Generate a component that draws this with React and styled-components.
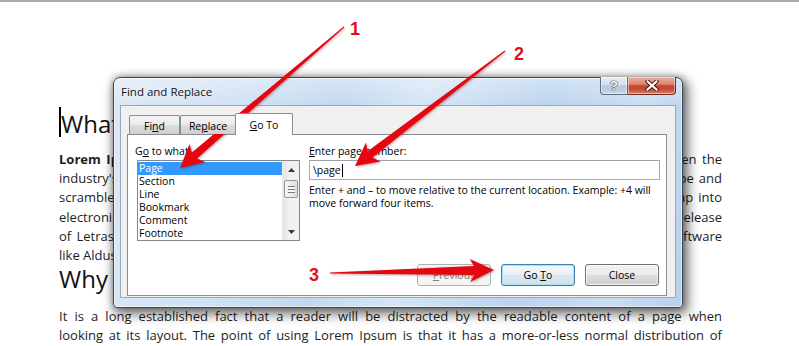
import React from "react";
import styled, { createGlobalStyle } from "styled-components";

const GlobalStyle = createGlobalStyle`
  html, body { margin: 0; padding: 0; background: #ffffff; }
  body { font-family: "Open Sans", "Noto Sans", sans-serif; overflow: hidden; }
  * { box-sizing: border-box; }
`;

const Page = styled.div`
  position: relative;
  width: 799px;
  height: 346px;
  overflow: hidden;
  background: #ffffff;
`;

const TopRule = styled.div`
  height: 2px;
  background: #a9adb2;
`;

const Doc = styled.article`
  width: 663px;
  margin-left: 59px;
  padding-top: 107px;
  color: #1d1d1d;
  font-family: "Open Sans", sans-serif;
`;

const Heading = styled.h1`
  margin: ${(p) => p.$mt || 0}px 0 0;
  font-size: 24px;
  font-weight: 400;
  line-height: 30px;
  color: #111;
  white-space: nowrap;
`;

const Caret = styled.span`
  display: inline-block;
  width: 2px;
  height: 30px;
  margin-top: -2px;
  vertical-align: top;
  background: #000;
`;

const Para = styled.div`
  margin-top: ${(p) => p.$mt}px;
  font-size: 13px;
  line-height: 19.2px;
`;

const Line = styled.div`
  text-align: ${(p) => (p.$last ? "left" : "justify")};
  text-align-last: ${(p) => (p.$last ? "left" : "justify")};
`;

/* ---------- dialog window ---------- */

const Window = styled.section`
  position: absolute;
  left: 113px;
  top: 77px;
  width: 570px;
  height: 231px;
  display: flex;
  flex-direction: column;
  padding: 0 6px 9px;
  border: 1px solid #3b4855;
  border-radius: 7px 7px 4px 4px;
  background:
    linear-gradient(180deg, rgba(255,255,255,0.35), rgba(255,255,255,0) 28px),
    linear-gradient(100deg, #dbe8f5 0%, #cfe1f3 22%, #c2d8ef 38%, #d5e5f6 52%, #bad3ee 72%, #c9ddf2 88%, #b7d0ec 100%);
  box-shadow: inset 0 0 0 1px rgba(255,255,255,0.55), 3px 4px 12px 2px rgba(0,0,0,0.55), 0 0 6px rgba(0,0,0,0.3);
  font-family: "Open Sans", sans-serif;
`;

const TitleBar = styled.header`
  height: 27px;
  display: flex;
  justify-content: space-between;
  align-items: flex-start;
`;

const Title = styled.h2`
  margin: 6px 0 0 1px;
  font-size: 11.5px;
  font-weight: 400;
  line-height: 15px;
  color: #141414;
  text-shadow: 0 0 6px rgba(255,255,255,0.9);
`;

const CaptionButtons = styled.div`
  display: flex;
  margin-top: -1px;
`;

const CaptionButton = styled.div`
  width: ${(p) => p.$w}px;
  height: 18px;
  border: 1px solid ${(p) => (p.$close ? "#6e2b21" : "#5d6d81")};
  border-top: none;
  border-left-width: ${(p) => (p.$close ? 0 : 1)}px;
  border-radius: ${(p) => (p.$close ? "0 0 4px 0" : "0 0 0 4px")};
  background: ${(p) =>
    p.$close
      ? "linear-gradient(#eab0a2 0%, #de8573 42%, #c8432e 52%, #c44a35 72%, #dc8466 100%)"
      : "linear-gradient(#e6edf5 0%, #d4dfeb 45%, #b8c8da 52%, #bfcee0 80%, #cbd9e8 100%)"};
  box-shadow: inset 0 0 0 1px rgba(255,255,255,0.45);
  display: flex;
  align-items: center;
  justify-content: center;
`;

const HelpGlyph = styled.span`
  font: bold 13px/1 "Liberation Sans", Arial, sans-serif;
  color: #ffffff;
  text-shadow: 0 0 1px #2c3440, 0 0 1px #2c3440, 0 0 1px #2c3440;
`;

const Client = styled.div`
  flex: 1;
  display: flex;
  flex-direction: column;
  padding: 7px 8px 1px 6px;
  background: #f0f0f0;
  border: 1px solid #98a8ba;
`;

const TabStrip = styled.div`
  height: 21px;
  display: flex;
  align-items: flex-end;
  padding-left: 2px;
`;

const Tab = styled.div`
  position: relative;
  z-index: ${(p) => (p.$active ? 2 : 1)};
  width: ${(p) => p.$w}px;
  height: ${(p) => (p.$active ? 22 : 19)}px;
  margin-bottom: ${(p) => (p.$active ? -1 : 0)}px;
  margin-left: ${(p) => (p.$active ? -1 : 0)}px;
  padding-top: ${(p) => (p.$active ? 0 : 1)}px;
  border: 1px solid #898c95;
  border-bottom: none;
  border-radius: 2px 2px 0 0;
  background: ${(p) =>
    p.$active ? "#ffffff" : "linear-gradient(#f3f3f3 0%, #ebebeb 50%, #dddddd 51%, #cfcfcf 100%)"};
  display: flex;
  align-items: center;
  justify-content: center;
  font-size: 10.5px;
  color: #000;
`;

const Panel = styled.div`
  flex: 1;
  display: flex;
  flex-direction: column;
  padding: 10px 6px 9px 7px;
  background: #ffffff;
  border: 1px solid #898c95;
  font-size: 10.5px;
  line-height: 13px;
  color: #000;
`;

const Columns = styled.div`
  display: flex;
  gap: 9px;
`;

const LeftCol = styled.div`
  width: 165px;
  display: flex;
  flex-direction: column;
`;

const RightCol = styled.div`
  flex: 1;
  display: flex;
  flex-direction: column;
`;

const Label = styled.div`
  height: 13px;
  margin-bottom: 2px;
  white-space: nowrap;
`;

const Key = styled.u`
  text-decoration: underline;
  text-underline-offset: 1px;
`;

const ListBox = styled.div`
  width: 163px;
  height: 81px;
  margin-left: 2px;
  display: flex;
  background: #ffffff;
  border: 1px solid #828790;
`;

const Items = styled.div`
  flex: 1;
  padding-top: 1px;
  overflow: hidden;
`;

const Item = styled.div`
  height: 13px;
  line-height: 13px;
  padding-left: 1px;
  white-space: nowrap;
  background: ${(p) => (p.$sel ? "#3399ff" : "transparent")};
  color: ${(p) => (p.$sel ? "#ffffff" : "#000000")};
`;

const ScrollBar = styled.div`
  width: 17px;
  display: flex;
  flex-direction: column;
  background: linear-gradient(90deg, #e4e4e4 0%, #f1f1f1 40%, #f1f1f1 100%);
  border-left: 1px solid #ececec;
`;

const ScrollArrow = styled.div`
  height: 17px;
  display: flex;
  align-items: center;
  justify-content: center;
`;

const Thumb = styled.div`
  height: 18px;
  margin: 2px 1px 0;
  border: 1px solid #979797;
  border-radius: 2px;
  background: linear-gradient(90deg, #f6f6f6 0%, #ececec 50%, #dcdcdc 100%);
  display: flex;
  align-items: center;
  justify-content: center;
`;

const Grip = styled.div`
  width: 7px;
  height: 7px;
  background: repeating-linear-gradient(180deg, #7a7a7a 0 1px, #f8f8f8 1px 3px);
`;

const Track = styled.div`
  flex: 1;
`;

const TextBox = styled.div`
  height: 20px;
  display: flex;
  align-items: center;
  padding-left: 3px;
  background: #ffffff;
  border: 1px solid #a7adb6;
  border-top-color: #9ea3ad;
`;

const TextCaret = styled.span`
  display: inline-block;
  width: 1px;
  height: 13px;
  margin-left: 1px;
  background: #000;
  vertical-align: middle;
`;

const Help = styled.p`
  margin: 4px 0 0;
  font-size: 10.5px;
  line-height: 13px;
`;

const ButtonRow = styled.div`
  margin-top: auto;
  display: flex;
  justify-content: flex-end;
  gap: 10px;
  padding-right: 1px;
`;

const Button = styled.div`
  width: 74px;
  height: 22px;
  display: flex;
  align-items: center;
  justify-content: center;
  border-radius: 3px;
  font-size: 10.5px;
  border: 1px solid
    ${(p) => (p.$variant === "disabled" ? "#adb2b5" : p.$variant === "default" ? "#3c7fb1" : "#707070")};
  color: ${(p) => (p.$variant === "disabled" ? "#838383" : "#000")};
  background: ${(p) =>
    p.$variant === "disabled"
      ? "#f4f4f4"
      : p.$variant === "default"
      ? "linear-gradient(#f4f9fc 0%, #e9f1f7 48%, #dbe7f0 52%, #d2e0ea 100%)"
      : "linear-gradient(#f2f2f2 0%, #ebebeb 48%, #dddddd 52%, #cfcfcf 100%)"};
  box-shadow: ${(p) =>
    p.$variant === "default"
      ? "inset 0 0 0 1px #9ee3fb"
      : p.$variant === "disabled"
      ? "none"
      : "inset 0 0 0 1px rgba(255,255,255,0.75)"};
`;

const Caption = styled.span`
  white-space: pre;
`;

/* ---------- annotations ---------- */

const Overlay = styled.svg`
  position: absolute;
  left: 0;
  top: 0;
  pointer-events: none;
  filter: drop-shadow(1px 1px 1px rgba(80, 0, 0, 0.35));
`;

const Num = styled.span`
  position: absolute;
  left: ${(p) => p.$x}px;
  top: ${(p) => p.$y}px;
  font: bold 18px/18px "Liberation Sans", Arial, sans-serif;
  color: #e3101b;
`;

function arrowPoints(tail, tip, o) {
  const [tx, ty] = tail;
  const [hx, hy] = tip;
  const dx = hx - tx;
  const dy = hy - ty;
  const L = Math.hypot(dx, dy);
  const ux = dx / L;
  const uy = dy / L;
  const nx = -uy;
  const ny = ux;
  const bx = hx - ux * o.head;
  const by = hy - uy * o.head;
  const wx = bx - ux * 4;
  const wy = by - uy * 4;
  const p = (x, y) => `${x.toFixed(1)},${y.toFixed(1)}`;
  return [
    p(tx + (nx * o.tail) / 2, ty + (ny * o.tail) / 2),
    p(bx + (nx * o.shaft) / 2, by + (ny * o.shaft) / 2),
    p(wx + nx * o.half, wy + ny * o.half),
    p(hx, hy),
    p(wx - nx * o.half, wy - ny * o.half),
    p(bx - (nx * o.shaft) / 2, by - (ny * o.shaft) / 2),
    p(tx - (nx * o.tail) / 2, ty - (ny * o.tail) / 2),
  ].join(" ");
}

const ARROWS = [
  { tail: [344, 27], tip: [180, 168], o: { tail: 1, shaft: 8, head: 19, half: 12 } },
  { tail: [505, 51], tip: [355, 166], o: { tail: 1, shaft: 8, head: 19, half: 12 } },
  { tail: [330, 273], tip: [494, 270], o: { tail: 1.2, shaft: 9, head: 20, half: 11.5 } },
];

const LIST = ["Page", "Section", "Line", "Bookmark", "Comment", "Footnote"];

function UpArrow() {
  return (
    <svg width="7" height="4" viewBox="0 0 7 4">
      <path d="M0 4 L3.5 0 L7 4 Z" fill="#3a3a3a" />
    </svg>
  );
}

function DownArrow() {
  return (
    <svg width="7" height="4" viewBox="0 0 7 4">
      <path d="M0 0 L7 0 L3.5 4 Z" fill="#3a3a3a" />
    </svg>
  );
}

function CloseGlyph() {
  return (
    <svg width="14" height="11" viewBox="0 0 14 11">
      <path d="M2.5 1.5 L11.5 9.5 M11.5 1.5 L2.5 9.5" stroke="#3d1a14" strokeWidth="4" strokeLinecap="square" />
      <path d="M2.5 1.5 L11.5 9.5 M11.5 1.5 L2.5 9.5" stroke="#ffffff" strokeWidth="2.2" strokeLinecap="square" />
    </svg>
  );
}

export default function App() {
  return (
    <>
      <GlobalStyle />
      <Page>
        <TopRule />
        <Doc>
          <Heading>
            <Caret />
            What is Lorem Ipsum?
          </Heading>
          <Para $mt={11}>
            <Line>
              <b>Lorem Ipsum</b> is simply dummy text of the printing and typesetting industry. Lorem Ipsum has been the
            </Line>
            <Line>industry's standard dummy text ever since the 1500s, when an unknown printer took a galley of type and</Line>
            <Line>scrambled it to make a type specimen book. It has survived not only five centuries, but also the leap into</Line>
            <Line>electronic typesetting, remaining essentially unchanged. It was popularised in the 1960s with the release</Line>
            <Line>of Letraset sheets containing Lorem Ipsum passages, and more recently with desktop publishing software</Line>
            <Line $last>like Aldus PageMaker including versions of Lorem Ipsum.</Line>
          </Para>
          <Heading $mt={-1}>Why do we use it?</Heading>
          <Para $mt={13}>
            <Line>It is a long established fact that a reader will be distracted by the readable content of a page when</Line>
            <Line>looking at its layout. The point of using Lorem Ipsum is that it has a more-or-less normal distribution of</Line>
            <Line>letters, as opposed to using 'Content here, content here', making it look like readable English. Many</Line>
          </Para>
        </Doc>

        <Window>
          <TitleBar>
            <Title>Find and Replace</Title>
            <CaptionButtons>
              <CaptionButton $w={28}>
                <HelpGlyph>?</HelpGlyph>
              </CaptionButton>
              <CaptionButton $w={48} $close>
                <CloseGlyph />
              </CaptionButton>
            </CaptionButtons>
          </TitleBar>
          <Client>
            <TabStrip>
              <Tab $w={51}>
                <Caption>
                  Fi<Key>n</Key>d
                </Caption>
              </Tab>
              <Tab $w={56}>
                <Caption>
                  Re<Key>p</Key>lace
                </Caption>
              </Tab>
              <Tab $w={58} $active>
                <Caption>
                  <Key>G</Key>o To
                </Caption>
              </Tab>
            </TabStrip>
            <Panel>
              <Columns>
                <LeftCol>
                  <Label>
                    G<Key>o</Key> to what:
                  </Label>
                  <ListBox>
                    <Items>
                      {LIST.map((t, i) => (
                        <Item key={t} $sel={i === 0}>
                          {t}
                        </Item>
                      ))}
                    </Items>
                    <ScrollBar>
                      <ScrollArrow>
                        <UpArrow />
                      </ScrollArrow>
                      <Thumb>
                        <Grip />
                      </Thumb>
                      <Track />
                      <ScrollArrow>
                        <DownArrow />
                      </ScrollArrow>
                    </ScrollBar>
                  </ListBox>
                </LeftCol>
                <RightCol>
                  <Label>
                    <Key>E</Key>nter page number:
                  </Label>
                  <TextBox>
                    <Caption>\page</Caption>
                    <TextCaret />
                  </TextBox>
                  <Help>
                    Enter + and – to move relative to the current location. Example: +4 will
                    <br />
                    move forward four items.
                  </Help>
                </RightCol>
              </Columns>
              <ButtonRow>
                <Button $variant="disabled">
                  <Caption>
                    <Key>P</Key>revious
                  </Caption>
                </Button>
                <Button $variant="default">
                  <Caption>
                    Go <Key>T</Key>o
                  </Caption>
                </Button>
                <Button>
                  <Caption>Close</Caption>
                </Button>
              </ButtonRow>
            </Panel>
          </Client>
        </Window>

        <Overlay width="799" height="346" viewBox="0 0 799 346">
          {ARROWS.map((a, i) => (
            <polygon key={i} points={arrowPoints(a.tail, a.tip, a.o)} fill="#e5060f" />
          ))}
        </Overlay>
        <Num $x={350} $y={20}>1</Num>
        <Num $x={514} $y={45}>2</Num>
        <Num $x={309} $y={266}>3</Num>
      </Page>
    </>
  );
}
